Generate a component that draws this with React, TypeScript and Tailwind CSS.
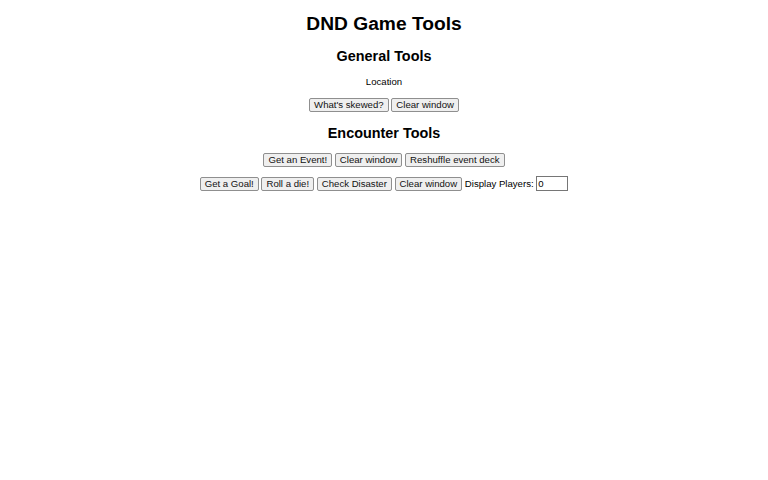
import React from 'react'

const btn =
    'h-[14px] px-[4px] bg-[#efefef] border border-[#8f8f8f] rounded-[2px] text-[9.6px] leading-[12px] text-[#111]'

function Btn({ children }: { children: React.ReactNode }) {
    return <button className={btn}>{children}</button>
}

export default function App() {
    return (
        <div className="w-[768px] h-[480px] bg-white flex flex-col items-center text-black font-['Liberation_Sans',Arial,sans-serif]">
            <h1 className="mt-[13px] text-[19.2px] leading-[22px] font-bold">DND Game Tools</h1>

            <h2 className="mt-[13px] text-[14.4px] leading-[17px] font-bold">General Tools</h2>
            <p className="mt-[11px] text-[9.6px] leading-[11px]">Location</p>
            <div className="mt-[11px] flex items-center gap-[2.7px]">
                <Btn>What's skewed?</Btn>
                <Btn>Clear window</Btn>
            </div>

            <h2 className="mt-[13px] text-[14.4px] leading-[17px] font-bold">Encounter Tools</h2>
            <div className="mt-[11px] flex items-center gap-[2.7px]">
                <Btn>Get an Event!</Btn>
                <Btn>Clear window</Btn>
                <Btn>Reshuffle event deck</Btn>
            </div>
            <div className="mt-[9px] flex items-center gap-[2.7px]">
                <Btn>Get a Goal!</Btn>
                <Btn>Roll a die!</Btn>
                <Btn>Check Disaster</Btn>
                <Btn>Clear window</Btn>
                <label className="text-[9.6px] leading-[11px] flex items-center gap-[2.7px]">
                    Display Players:
                    <input
                        defaultValue="0"
                        className="w-[32px] h-[15px] px-[1px] border border-[#767676] bg-white text-[9.6px] leading-[11px] outline-none"
                    />
                </label>
            </div>
        </div>
    )
}
